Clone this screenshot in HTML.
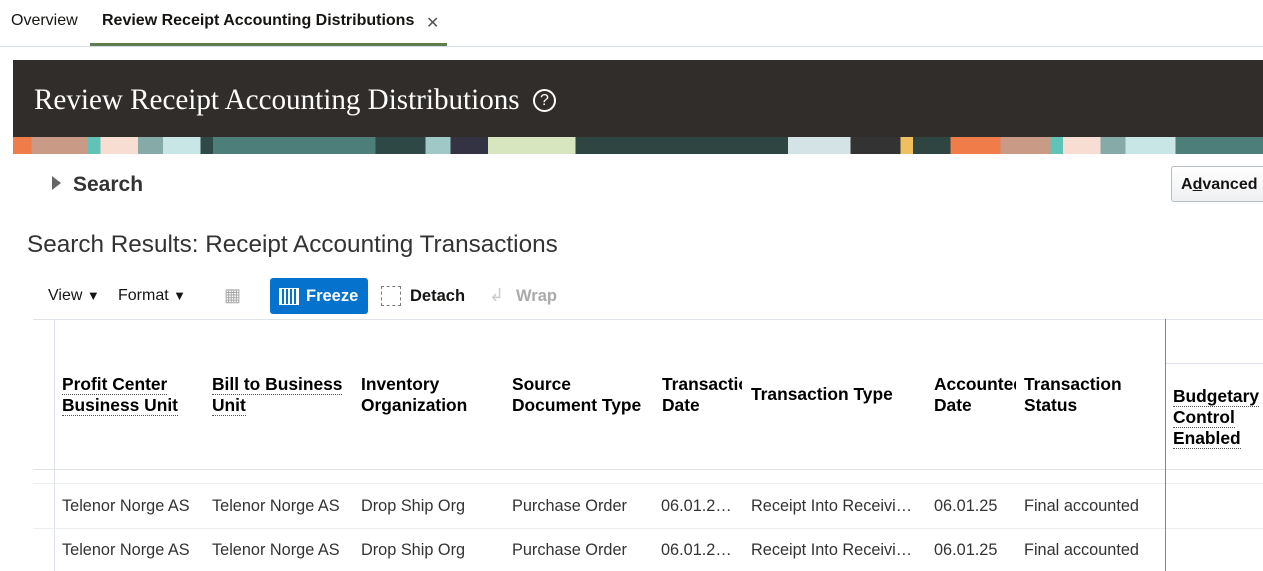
<!DOCTYPE html><html><head><style>
body{margin:0;width:1263px;height:571px;overflow:hidden;background:#fff;font-family:"Liberation Sans",Arial,sans-serif;position:relative;color:#161513}
.a{position:absolute;white-space:nowrap}
.h{font-weight:bold;font-size:17.4px;line-height:21px;color:#000}
.u{border-bottom:1px dotted #555}
.c{font-size:16.3px;color:#333}
.hl{position:absolute;height:1px;background:#dfe4ea}
</style></head><body>
<div class="a" style="left:11px;top:12px;font-size:16px">Overview</div>
<div class="a" style="left:102px;top:12px;font-size:16px;font-weight:bold">Review Receipt Accounting Distributions</div>
<div class="a" style="left:426px;top:13px;font-size:16px;color:#555">✕</div>
<div class="hl" style="left:0;top:46px;width:1263px;background:#d6dde4"></div>
<div class="a" style="left:90px;top:43px;width:357px;height:3px;background:#5f7d4f"></div>
<div class="a" style="left:13px;top:60px;width:1250px;height:78px;background:#312d2a"></div>
<div class="a" style="left:34px;top:84px;font-family:'Liberation Serif',serif;font-size:29.1px;color:#fff">Review Receipt Accounting Distributions</div>
<div class="a" style="left:533px;top:89px;width:19px;height:19px;border:2px solid #fff;border-radius:50%;color:#fff;font-size:16px;text-align:center;line-height:19px">?</div>
<div class="a" style="left:13px;top:137px;width:1250px;height:17px;background:linear-gradient(90deg,#f07c4a 0 1.5%,#c99a85 1.5% 6%,#5fc3b8 6% 7%,#f8ddd3 7% 10%,#86aaa8 10% 12%,#c8e6e6 12% 15%,#2f4a46 15% 16%,#4e7e79 16% 29%,#2d4845 29% 33%,#9fc8c6 33% 35%,#334 35% 38%,#d8e6c0 38% 45%,#2e4541 45% 62%,#d4e4e6 62% 67%,#333 67% 71%,#f0c060 71% 72%,#2e4541 72% 75%,#f07c4a 75% 79%,#c99a85 79% 83%,#5fc3b8 83% 84%,#f8ddd3 84% 87%,#86aaa8 87% 89%,#c8e6e6 89% 93%,#4e7e79 93% 100%)"></div>
<div class="a" style="left:52px;top:176px;width:0;height:0;border-left:9px solid #666;border-top:7px solid transparent;border-bottom:7px solid transparent"></div>
<div class="a" style="left:73px;top:173px;font-size:21px;font-weight:bold;color:#333">Search</div>
<div class="a" style="left:1171px;top:166px;width:100px;height:36px;border:1px solid #b8bec5;border-radius:3px;background:linear-gradient(#fff,#eef0f2);font-weight:bold;font-size:16px;line-height:35px;padding-left:9px;box-sizing:border-box">A<u>d</u>vanced</div>
<div class="a" style="left:27px;top:231px;font-size:24.3px;color:#333">Search Results: Receipt Accounting Transactions</div>
<div class="a" style="left:48px;top:287px;font-size:16px">View <span style="font-size:13px">▼</span></div>
<div class="a" style="left:118px;top:287px;font-size:16px">Format <span style="font-size:13px">▼</span></div>
<div class="a" style="left:224px;top:285px;width:20px;height:20px;color:#aaa;font-size:18px">▦</div>
<div class="a" style="left:270px;top:278px;width:98px;height:36px;background:#0572ce;border-radius:3px"></div>
<div class="a" style="left:279px;top:288px;width:18px;height:15px;border:1px solid #fff;background:repeating-linear-gradient(90deg,#fff 0 2px,transparent 2px 4px)"></div>
<div class="a" style="left:306px;top:287px;font-size:16.5px;font-weight:bold;color:#fff">Freeze</div>
<div class="a" style="left:381px;top:286px;width:18px;height:18px;border:1px dashed #777"></div>
<div class="a" style="left:410px;top:287px;font-size:16.5px;font-weight:bold">Detach</div>
<div class="a" style="left:489px;top:285px;font-size:18px;color:#ccc">↲</div>
<div class="a" style="left:516px;top:287px;font-size:16.5px;font-weight:bold;color:#aaa">Wrap</div>
<div class="hl" style="left:33px;top:319px;width:1230px"></div>
<div class="a" style="left:54px;top:319px;width:1px;height:252px;background:#dfe4ea"></div>
<div class="hl" style="left:33px;top:469px;width:1230px"></div>
<div class="hl" style="left:33px;top:483px;width:1230px;background:#eceff2"></div>
<div class="hl" style="left:33px;top:528px;width:1230px;background:#eceff2"></div>
<div class="hl" style="left:1165px;top:363px;width:98px"></div>
<div class="a" style="left:1165px;top:319px;width:1px;height:252px;background:#3a9fc6"></div>
<div class="a h" style="left:62px;top:374px"><span class="u">Profit Center</span><br><span class="u">Business Unit</span></div>
<div class="a h" style="left:212px;top:374px"><span class="u">Bill to Business</span><br><span class="u">Unit</span></div>
<div class="a h" style="left:361px;top:374px">Inventory<br>Organization</div>
<div class="a h" style="left:512px;top:374px">Source<br>Document Type</div>
<div class="a h" style="left:662px;top:374px;width:80px;overflow:hidden">Transaction<br>Date</div>
<div class="a h" style="left:751px;top:384px">Transaction Type</div>
<div class="a h" style="left:934px;top:374px;width:82px;overflow:hidden">Accounted<br>Date</div>
<div class="a h" style="left:1024px;top:374px">Transaction<br>Status</div>
<div class="a h" style="left:1173px;top:386px"><span class="u">Budgetary</span><br><span class="u">Control</span><br><span class="u">Enabled</span></div>
<div class="a c" style="left:62px;top:497px">Telenor Norge AS</div><div class="a c" style="left:212px;top:497px">Telenor Norge AS</div><div class="a c" style="left:361px;top:497px">Drop Ship Org</div><div class="a c" style="left:512px;top:497px">Purchase Order</div><div class="a c" style="left:661px;top:497px">06.01.2…</div><div class="a c" style="left:751px;top:497px">Receipt Into Receivi…</div><div class="a c" style="left:934px;top:497px">06.01.25</div><div class="a c" style="left:1024px;top:497px">Final accounted</div>
<div class="a c" style="left:62px;top:541px">Telenor Norge AS</div><div class="a c" style="left:212px;top:541px">Telenor Norge AS</div><div class="a c" style="left:361px;top:541px">Drop Ship Org</div><div class="a c" style="left:512px;top:541px">Purchase Order</div><div class="a c" style="left:661px;top:541px">06.01.2…</div><div class="a c" style="left:751px;top:541px">Receipt Into Receivi…</div><div class="a c" style="left:934px;top:541px">06.01.25</div><div class="a c" style="left:1024px;top:541px">Final accounted</div>
</body></html>
